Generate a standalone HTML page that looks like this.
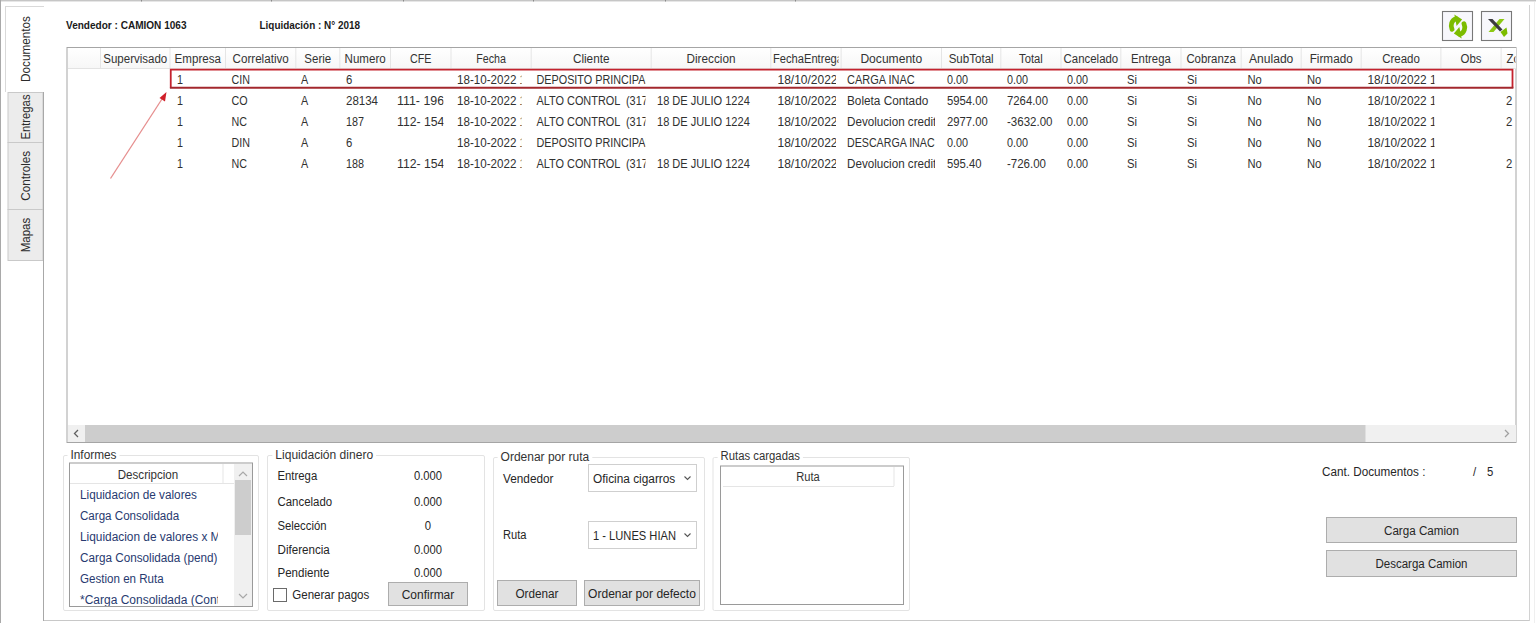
<!DOCTYPE html>
<html><head><meta charset="utf-8"><style>
html,body{margin:0;padding:0;width:1536px;height:623px;overflow:hidden;background:#fff}
svg text{font-family:"Liberation Sans",sans-serif}
</style></head><body>
<svg width="1536" height="623" viewBox="0 0 1536 623" style="display:block">
<rect x="0" y="0" width="1536" height="623" fill="#ffffff"/>
<rect x="0" y="0" width="1536" height="1" fill="#c6c6c6"/>
<rect x="0" y="1" width="1536" height="1" fill="#e6e6e6"/>
<rect x="0" y="0" width="1" height="623" fill="#a9a9a9"/>
<rect x="141" y="0" width="1" height="1.5" fill="#8a8a8a"/>
<rect x="271" y="0" width="1" height="1.5" fill="#8a8a8a"/>
<rect x="403" y="0" width="1" height="1.5" fill="#8a8a8a"/>
<rect x="533" y="0" width="1" height="1.5" fill="#8a8a8a"/>
<rect x="665" y="0" width="1" height="1.5" fill="#8a8a8a"/>
<rect x="795" y="0" width="1" height="1.5" fill="#8a8a8a"/>
<rect x="43" y="6" width="1" height="615" fill="#a8a8a8"/>
<rect x="43" y="620" width="1487" height="1" fill="#c8c8c8"/>
<rect x="1529" y="5" width="1" height="616" fill="#d2d2d2"/>
<rect x="1534" y="2" width="1" height="621" fill="#efefef"/>
<rect x="5" y="6" width="39" height="86" fill="#ffffff"/>
<rect x="5" y="6" width="39" height="1" fill="#d9d9d9"/>
<rect x="5" y="6" width="1" height="86" fill="#d9d9d9"/>
<g transform="translate(29.5 49) rotate(-90)">
<text x="0" y="0" font-size="12" fill="#2b2b2b" text-anchor="middle" textLength="66.0" lengthAdjust="spacingAndGlyphs">Documentos</text>
</g>
<rect x="8" y="92.5" width="35" height="50.0" fill="#ececec"/>
<rect x="8" y="92.5" width="35" height="50.0" fill="none" stroke="#c9c9c9" stroke-width="1"/>
<g transform="translate(29.5 117) rotate(-90)">
<text x="0" y="0" font-size="12" fill="#2b2b2b" text-anchor="middle" textLength="45.0" lengthAdjust="spacingAndGlyphs">Entregas</text>
</g>
<rect x="8" y="142.5" width="35" height="67.0" fill="#ececec"/>
<rect x="8" y="142.5" width="35" height="67.0" fill="none" stroke="#c9c9c9" stroke-width="1"/>
<g transform="translate(29.5 175.8) rotate(-90)">
<text x="0" y="0" font-size="12" fill="#2b2b2b" text-anchor="middle" textLength="49.7" lengthAdjust="spacingAndGlyphs">Controles</text>
</g>
<rect x="8" y="209.5" width="35" height="51.0" fill="#ececec"/>
<rect x="8" y="209.5" width="35" height="51.0" fill="none" stroke="#c9c9c9" stroke-width="1"/>
<g transform="translate(29.5 235) rotate(-90)">
<text x="0" y="0" font-size="12" fill="#2b2b2b" text-anchor="middle" textLength="34.5" lengthAdjust="spacingAndGlyphs">Mapas</text>
</g>
<rect x="43" y="92" width="1" height="529" fill="#a8a8a8"/>
<text x="66" y="29" font-size="11.5" font-weight="bold" fill="#1a1a1a" text-anchor="start" textLength="120.5" lengthAdjust="spacingAndGlyphs">Vendedor : CAMION 1063</text>
<text x="259.5" y="29" font-size="11.5" font-weight="bold" fill="#1a1a1a" text-anchor="start" textLength="100.5" lengthAdjust="spacingAndGlyphs">Liquidación : N° 2018</text>
<rect x="1442.5" y="11.5" width="30" height="29" fill="#f7f7fc" stroke="#787878" stroke-width="1.1"/>
<rect x="1481.5" y="11.5" width="30" height="29" fill="#f7f7fc" stroke="#787878" stroke-width="1.1"/>
<g transform="translate(1458 26.5) scale(0.92) translate(-1458 -26.5)"><g fill="none" stroke="#7cbc00" stroke-width="5.2" stroke-linecap="round"><path d="M1451.5 29.5 C1449.5 25 1451 19.5 1456 18"/><path d="M1464.5 23.5 C1466.5 28 1465 33.5 1460 35"/></g><g fill="#7cbc00"><path d="M1454 13.5 L1462.5 19 L1456.5 26 Z"/><path d="M1462 39.5 L1453.5 34 L1459.5 27 Z"/></g></g>
<path d="M1488.5 32 L1499.5 19 L1504.5 19 L1493.5 32 Z" fill="#8cc814"/>
<path d="M1488 19 L1492.5 19 L1502.5 29.5 L1500 31.5 Z" fill="#3c3c40"/>
<path d="M1500.5 32 L1506.5 27.5 L1507.5 33.5 L1504 37 Z" fill="#7cbc00"/>
<rect x="67" y="47.5" width="1449.0" height="395.0" fill="#ffffff" stroke="#a5a5a5" stroke-width="1"/>
<defs><linearGradient id="hg" x1="0" y1="0" x2="0" y2="1"><stop offset="0" stop-color="#ffffff"/><stop offset="1" stop-color="#f7f7f7"/></linearGradient></defs>
<rect x="68" y="48" width="1448" height="20" fill="url(#hg)"/>
<rect x="68" y="68" width="1448" height="1" fill="#e3e3e3"/>
<rect x="100" y="48" width="1" height="20" fill="#e5e5e5"/>
<rect x="169.5" y="48" width="1" height="20" fill="#e5e5e5"/>
<rect x="225" y="48" width="1" height="20" fill="#e5e5e5"/>
<rect x="295.3" y="48" width="1" height="20" fill="#e5e5e5"/>
<rect x="339.3" y="48" width="1" height="20" fill="#e5e5e5"/>
<rect x="390" y="48" width="1" height="20" fill="#e5e5e5"/>
<rect x="450.5" y="48" width="1" height="20" fill="#e5e5e5"/>
<rect x="530.7" y="48" width="1" height="20" fill="#e5e5e5"/>
<rect x="650.7" y="48" width="1" height="20" fill="#e5e5e5"/>
<rect x="770.3" y="48" width="1" height="20" fill="#e5e5e5"/>
<rect x="840.6" y="48" width="1" height="20" fill="#e5e5e5"/>
<rect x="941" y="48" width="1" height="20" fill="#e5e5e5"/>
<rect x="1000.3" y="48" width="1" height="20" fill="#e5e5e5"/>
<rect x="1060.5" y="48" width="1" height="20" fill="#e5e5e5"/>
<rect x="1120.3" y="48" width="1" height="20" fill="#e5e5e5"/>
<rect x="1180.5" y="48" width="1" height="20" fill="#e5e5e5"/>
<rect x="1240.7" y="48" width="1" height="20" fill="#e5e5e5"/>
<rect x="1300.7" y="48" width="1" height="20" fill="#e5e5e5"/>
<rect x="1360.7" y="48" width="1" height="20" fill="#e5e5e5"/>
<rect x="1440.4" y="48" width="1" height="20" fill="#e5e5e5"/>
<rect x="1500.6" y="48" width="1" height="20" fill="#e5e5e5"/>
<svg x="101" y="48" width="68.5" height="20" overflow="hidden">
<text x="34.25" y="14.899999999999999" font-size="12" fill="#333333" text-anchor="middle" textLength="64.0" lengthAdjust="spacingAndGlyphs">Supervisado</text>
</svg>
<svg x="170.5" y="48" width="54.5" height="20" overflow="hidden">
<text x="27.25" y="14.899999999999999" font-size="12" fill="#333333" text-anchor="middle" textLength="46.3" lengthAdjust="spacingAndGlyphs">Empresa</text>
</svg>
<svg x="226" y="48" width="69.30000000000001" height="20" overflow="hidden">
<text x="34.650000000000006" y="14.899999999999999" font-size="12" fill="#333333" text-anchor="middle" textLength="56.2" lengthAdjust="spacingAndGlyphs">Correlativo</text>
</svg>
<svg x="296.3" y="48" width="43.0" height="20" overflow="hidden">
<text x="21.5" y="14.899999999999999" font-size="12" fill="#333333" text-anchor="middle" textLength="26.9" lengthAdjust="spacingAndGlyphs">Serie</text>
</svg>
<svg x="340.3" y="48" width="49.69999999999999" height="20" overflow="hidden">
<text x="24.849999999999994" y="14.899999999999999" font-size="12" fill="#333333" text-anchor="middle" textLength="41.1" lengthAdjust="spacingAndGlyphs">Numero</text>
</svg>
<svg x="391" y="48" width="59.5" height="20" overflow="hidden">
<text x="29.75" y="14.899999999999999" font-size="12" fill="#333333" text-anchor="middle" textLength="21.5" lengthAdjust="spacingAndGlyphs">CFE</text>
</svg>
<svg x="451.5" y="48" width="79.20000000000005" height="20" overflow="hidden">
<text x="39.60000000000002" y="14.899999999999999" font-size="12" fill="#333333" text-anchor="middle" textLength="29.7" lengthAdjust="spacingAndGlyphs">Fecha</text>
</svg>
<svg x="531.7" y="48" width="119.0" height="20" overflow="hidden">
<text x="59.5" y="14.899999999999999" font-size="12" fill="#333333" text-anchor="middle" textLength="36.6" lengthAdjust="spacingAndGlyphs">Cliente</text>
</svg>
<svg x="651.7" y="48" width="118.59999999999991" height="20" overflow="hidden">
<text x="59.299999999999955" y="14.899999999999999" font-size="12" fill="#333333" text-anchor="middle" textLength="48.9" lengthAdjust="spacingAndGlyphs">Direccion</text>
</svg>
<svg x="771.3" y="48" width="67.20000000000005" height="20" overflow="hidden">
<text x="1.7000000000000455" y="14.899999999999999" font-size="12" fill="#333333" text-anchor="start" textLength="70.0" lengthAdjust="spacingAndGlyphs">FechaEntrega</text>
</svg>
<svg x="841.6" y="48" width="99.39999999999998" height="20" overflow="hidden">
<text x="49.69999999999999" y="14.899999999999999" font-size="12" fill="#333333" text-anchor="middle" textLength="61.8" lengthAdjust="spacingAndGlyphs">Documento</text>
</svg>
<svg x="942" y="48" width="58.299999999999955" height="20" overflow="hidden">
<text x="29.149999999999977" y="14.899999999999999" font-size="12" fill="#333333" text-anchor="middle" textLength="45.0" lengthAdjust="spacingAndGlyphs">SubTotal</text>
</svg>
<svg x="1001.3" y="48" width="59.200000000000045" height="20" overflow="hidden">
<text x="29.600000000000023" y="14.899999999999999" font-size="12" fill="#333333" text-anchor="middle" textLength="23.7" lengthAdjust="spacingAndGlyphs">Total</text>
</svg>
<svg x="1061.5" y="48" width="58.799999999999955" height="20" overflow="hidden">
<text x="29.399999999999977" y="14.899999999999999" font-size="12" fill="#333333" text-anchor="middle" textLength="54.6" lengthAdjust="spacingAndGlyphs">Cancelado</text>
</svg>
<svg x="1121.3" y="48" width="59.200000000000045" height="20" overflow="hidden">
<text x="29.600000000000023" y="14.899999999999999" font-size="12" fill="#333333" text-anchor="middle" textLength="39.7" lengthAdjust="spacingAndGlyphs">Entrega</text>
</svg>
<svg x="1181.5" y="48" width="59.200000000000045" height="20" overflow="hidden">
<text x="29.600000000000023" y="14.899999999999999" font-size="12" fill="#333333" text-anchor="middle" textLength="49.4" lengthAdjust="spacingAndGlyphs">Cobranza</text>
</svg>
<svg x="1241.7" y="48" width="59.0" height="20" overflow="hidden">
<text x="29.5" y="14.899999999999999" font-size="12" fill="#333333" text-anchor="middle" textLength="44.3" lengthAdjust="spacingAndGlyphs">Anulado</text>
</svg>
<svg x="1301.7" y="48" width="59.0" height="20" overflow="hidden">
<text x="29.5" y="14.899999999999999" font-size="12" fill="#333333" text-anchor="middle" textLength="43.0" lengthAdjust="spacingAndGlyphs">Firmado</text>
</svg>
<svg x="1361.7" y="48" width="78.70000000000005" height="20" overflow="hidden">
<text x="39.35000000000002" y="14.899999999999999" font-size="12" fill="#333333" text-anchor="middle" textLength="37.7" lengthAdjust="spacingAndGlyphs">Creado</text>
</svg>
<svg x="1441.4" y="48" width="59.19999999999982" height="20" overflow="hidden">
<text x="29.59999999999991" y="14.899999999999999" font-size="12" fill="#333333" text-anchor="middle" textLength="21.0" lengthAdjust="spacingAndGlyphs">Obs</text>
</svg>
<svg x="1501.6" y="48" width="13.900000000000091" height="20" overflow="hidden">
<text x="4.900000000000091" y="14.899999999999999" font-size="12" fill="#333333" text-anchor="start" textLength="26.1" lengthAdjust="spacingAndGlyphs">Zona</text>
</svg>
<svg x="169.5" y="68" width="49.5" height="21" overflow="hidden">
<text x="7.5" y="16" font-size="12" fill="#303030" text-anchor="start" textLength="6.0" lengthAdjust="spacingAndGlyphs">1</text>
</svg>
<svg x="225" y="68" width="64.30000000000001" height="21" overflow="hidden">
<text x="6.5" y="16" font-size="12" fill="#303030" text-anchor="start" textLength="18.5" lengthAdjust="spacingAndGlyphs">CIN</text>
</svg>
<svg x="295.3" y="68" width="38.0" height="21" overflow="hidden">
<text x="5.699999999999989" y="16" font-size="12" fill="#303030" text-anchor="start" textLength="7.2" lengthAdjust="spacingAndGlyphs">A</text>
</svg>
<svg x="339.3" y="68" width="44.69999999999999" height="21" overflow="hidden">
<text x="6.699999999999989" y="16" font-size="12" fill="#303030" text-anchor="start" textLength="6.3" lengthAdjust="spacingAndGlyphs">6</text>
</svg>
<svg x="450.5" y="68" width="71.0" height="21" overflow="hidden">
<text x="6.5" y="16" font-size="12" fill="#303030" text-anchor="start" textLength="69.0" lengthAdjust="spacingAndGlyphs">18-10-2022 1</text>
</svg>
<svg x="530.7" y="68" width="114.79999999999995" height="21" overflow="hidden">
<text x="5.7999999999999545" y="16" font-size="12" fill="#303030" text-anchor="start" textLength="115.0" lengthAdjust="spacingAndGlyphs">DEPOSITO PRINCIPAL</text>
</svg>
<svg x="770.3" y="68" width="65.70000000000005" height="21" overflow="hidden">
<text x="7.2000000000000455" y="16" font-size="12" fill="#303030" text-anchor="start" textLength="60.0" lengthAdjust="spacingAndGlyphs">18/10/2022</text>
</svg>
<svg x="840.6" y="68" width="94.39999999999998" height="21" overflow="hidden">
<text x="6.399999999999977" y="16" font-size="12" fill="#303030" text-anchor="start" textLength="67.7" lengthAdjust="spacingAndGlyphs">CARGA INAC</text>
</svg>
<svg x="941" y="68" width="53.299999999999955" height="21" overflow="hidden">
<text x="6" y="16" font-size="12" fill="#303030" text-anchor="start" textLength="21.0" lengthAdjust="spacingAndGlyphs">0.00</text>
</svg>
<svg x="1000.3" y="68" width="54.200000000000045" height="21" overflow="hidden">
<text x="6.7000000000000455" y="16" font-size="12" fill="#303030" text-anchor="start" textLength="21.0" lengthAdjust="spacingAndGlyphs">0.00</text>
</svg>
<svg x="1060.5" y="68" width="53.799999999999955" height="21" overflow="hidden">
<text x="6.5" y="16" font-size="12" fill="#303030" text-anchor="start" textLength="21.0" lengthAdjust="spacingAndGlyphs">0.00</text>
</svg>
<svg x="1120.3" y="68" width="54.200000000000045" height="21" overflow="hidden">
<text x="6.7000000000000455" y="16" font-size="12" fill="#303030" text-anchor="start" textLength="10.0" lengthAdjust="spacingAndGlyphs">Si</text>
</svg>
<svg x="1180.5" y="68" width="54.200000000000045" height="21" overflow="hidden">
<text x="6.5" y="16" font-size="12" fill="#303030" text-anchor="start" textLength="10.0" lengthAdjust="spacingAndGlyphs">Si</text>
</svg>
<svg x="1240.7" y="68" width="54.0" height="21" overflow="hidden">
<text x="6.7999999999999545" y="16" font-size="12" fill="#303030" text-anchor="start" textLength="14.3" lengthAdjust="spacingAndGlyphs">No</text>
</svg>
<svg x="1300.7" y="68" width="54.0" height="21" overflow="hidden">
<text x="6.2999999999999545" y="16" font-size="12" fill="#303030" text-anchor="start" textLength="14.3" lengthAdjust="spacingAndGlyphs">No</text>
</svg>
<svg x="1360.7" y="68" width="73.79999999999995" height="21" overflow="hidden">
<text x="6.7999999999999545" y="16" font-size="12" fill="#303030" text-anchor="start" textLength="69.0" lengthAdjust="spacingAndGlyphs">18/10/2022 1</text>
</svg>
<svg x="169.5" y="89" width="49.5" height="21" overflow="hidden">
<text x="7.5" y="16" font-size="12" fill="#303030" text-anchor="start" textLength="6.0" lengthAdjust="spacingAndGlyphs">1</text>
</svg>
<svg x="225" y="89" width="64.30000000000001" height="21" overflow="hidden">
<text x="6.5" y="16" font-size="12" fill="#303030" text-anchor="start" textLength="16.1" lengthAdjust="spacingAndGlyphs">CO</text>
</svg>
<svg x="295.3" y="89" width="38.0" height="21" overflow="hidden">
<text x="5.699999999999989" y="16" font-size="12" fill="#303030" text-anchor="start" textLength="7.2" lengthAdjust="spacingAndGlyphs">A</text>
</svg>
<svg x="339.3" y="89" width="44.69999999999999" height="21" overflow="hidden">
<text x="6.699999999999989" y="16" font-size="12" fill="#303030" text-anchor="start" textLength="32.0" lengthAdjust="spacingAndGlyphs">28134</text>
</svg>
<svg x="390" y="89" width="53.5" height="21" overflow="hidden">
<text x="7" y="16" font-size="12" fill="#303030" text-anchor="start" textLength="61.0" lengthAdjust="spacingAndGlyphs">111- 19637</text>
</svg>
<svg x="450.5" y="89" width="71.0" height="21" overflow="hidden">
<text x="6.5" y="16" font-size="12" fill="#303030" text-anchor="start" textLength="69.0" lengthAdjust="spacingAndGlyphs">18-10-2022 1</text>
</svg>
<svg x="530.7" y="89" width="114.79999999999995" height="21" overflow="hidden">
<text x="5.7999999999999545" y="16" font-size="12" fill="#303030" text-anchor="start" textLength="121.0" lengthAdjust="spacingAndGlyphs">ALTO CONTROL  (3171)</text>
</svg>
<svg x="650.7" y="89" width="113.59999999999991" height="21" overflow="hidden">
<text x="6.2999999999999545" y="16" font-size="12" fill="#303030" text-anchor="start" textLength="92.8" lengthAdjust="spacingAndGlyphs">18 DE JULIO 1224</text>
</svg>
<svg x="770.3" y="89" width="65.70000000000005" height="21" overflow="hidden">
<text x="7.2000000000000455" y="16" font-size="12" fill="#303030" text-anchor="start" textLength="60.0" lengthAdjust="spacingAndGlyphs">18/10/2022</text>
</svg>
<svg x="840.6" y="89" width="94.39999999999998" height="21" overflow="hidden">
<text x="6.399999999999977" y="16" font-size="12" fill="#303030" text-anchor="start" textLength="81.3" lengthAdjust="spacingAndGlyphs">Boleta Contado</text>
</svg>
<svg x="941" y="89" width="53.299999999999955" height="21" overflow="hidden">
<text x="6" y="16" font-size="12" fill="#303030" text-anchor="start" textLength="40.7" lengthAdjust="spacingAndGlyphs">5954.00</text>
</svg>
<svg x="1000.3" y="89" width="54.200000000000045" height="21" overflow="hidden">
<text x="6.7000000000000455" y="16" font-size="12" fill="#303030" text-anchor="start" textLength="41.0" lengthAdjust="spacingAndGlyphs">7264.00</text>
</svg>
<svg x="1060.5" y="89" width="53.799999999999955" height="21" overflow="hidden">
<text x="6.5" y="16" font-size="12" fill="#303030" text-anchor="start" textLength="21.0" lengthAdjust="spacingAndGlyphs">0.00</text>
</svg>
<svg x="1120.3" y="89" width="54.200000000000045" height="21" overflow="hidden">
<text x="6.7000000000000455" y="16" font-size="12" fill="#303030" text-anchor="start" textLength="10.0" lengthAdjust="spacingAndGlyphs">Si</text>
</svg>
<svg x="1180.5" y="89" width="54.200000000000045" height="21" overflow="hidden">
<text x="6.5" y="16" font-size="12" fill="#303030" text-anchor="start" textLength="10.0" lengthAdjust="spacingAndGlyphs">Si</text>
</svg>
<svg x="1240.7" y="89" width="54.0" height="21" overflow="hidden">
<text x="6.7999999999999545" y="16" font-size="12" fill="#303030" text-anchor="start" textLength="14.3" lengthAdjust="spacingAndGlyphs">No</text>
</svg>
<svg x="1300.7" y="89" width="54.0" height="21" overflow="hidden">
<text x="6.2999999999999545" y="16" font-size="12" fill="#303030" text-anchor="start" textLength="14.3" lengthAdjust="spacingAndGlyphs">No</text>
</svg>
<svg x="1360.7" y="89" width="73.79999999999995" height="21" overflow="hidden">
<text x="6.7999999999999545" y="16" font-size="12" fill="#303030" text-anchor="start" textLength="69.0" lengthAdjust="spacingAndGlyphs">18/10/2022 1</text>
</svg>
<svg x="1500.6" y="89" width="14.900000000000091" height="21" overflow="hidden">
<text x="5.400000000000091" y="16" font-size="12" fill="#303030" text-anchor="start" textLength="6.3" lengthAdjust="spacingAndGlyphs">2</text>
</svg>
<svg x="169.5" y="110" width="49.5" height="21" overflow="hidden">
<text x="7.5" y="16" font-size="12" fill="#303030" text-anchor="start" textLength="6.0" lengthAdjust="spacingAndGlyphs">1</text>
</svg>
<svg x="225" y="110" width="64.30000000000001" height="21" overflow="hidden">
<text x="6.5" y="16" font-size="12" fill="#303030" text-anchor="start" textLength="15.5" lengthAdjust="spacingAndGlyphs">NC</text>
</svg>
<svg x="295.3" y="110" width="38.0" height="21" overflow="hidden">
<text x="5.699999999999989" y="16" font-size="12" fill="#303030" text-anchor="start" textLength="7.2" lengthAdjust="spacingAndGlyphs">A</text>
</svg>
<svg x="339.3" y="110" width="44.69999999999999" height="21" overflow="hidden">
<text x="6.699999999999989" y="16" font-size="12" fill="#303030" text-anchor="start" textLength="18.0" lengthAdjust="spacingAndGlyphs">187</text>
</svg>
<svg x="390" y="110" width="53.5" height="21" overflow="hidden">
<text x="7" y="16" font-size="12" fill="#303030" text-anchor="start" textLength="61.0" lengthAdjust="spacingAndGlyphs">112- 15432</text>
</svg>
<svg x="450.5" y="110" width="71.0" height="21" overflow="hidden">
<text x="6.5" y="16" font-size="12" fill="#303030" text-anchor="start" textLength="69.0" lengthAdjust="spacingAndGlyphs">18-10-2022 1</text>
</svg>
<svg x="530.7" y="110" width="114.79999999999995" height="21" overflow="hidden">
<text x="5.7999999999999545" y="16" font-size="12" fill="#303030" text-anchor="start" textLength="121.0" lengthAdjust="spacingAndGlyphs">ALTO CONTROL  (3171)</text>
</svg>
<svg x="650.7" y="110" width="113.59999999999991" height="21" overflow="hidden">
<text x="6.2999999999999545" y="16" font-size="12" fill="#303030" text-anchor="start" textLength="92.8" lengthAdjust="spacingAndGlyphs">18 DE JULIO 1224</text>
</svg>
<svg x="770.3" y="110" width="65.70000000000005" height="21" overflow="hidden">
<text x="7.2000000000000455" y="16" font-size="12" fill="#303030" text-anchor="start" textLength="60.0" lengthAdjust="spacingAndGlyphs">18/10/2022</text>
</svg>
<svg x="840.6" y="110" width="94.39999999999998" height="21" overflow="hidden">
<text x="6.399999999999977" y="16" font-size="12" fill="#303030" text-anchor="start" textLength="95.8" lengthAdjust="spacingAndGlyphs">Devolucion credito</text>
</svg>
<svg x="941" y="110" width="53.299999999999955" height="21" overflow="hidden">
<text x="6" y="16" font-size="12" fill="#303030" text-anchor="start" textLength="40.7" lengthAdjust="spacingAndGlyphs">2977.00</text>
</svg>
<svg x="1000.3" y="110" width="54.200000000000045" height="21" overflow="hidden">
<text x="6.7000000000000455" y="16" font-size="12" fill="#303030" text-anchor="start" textLength="45.5" lengthAdjust="spacingAndGlyphs">-3632.00</text>
</svg>
<svg x="1060.5" y="110" width="53.799999999999955" height="21" overflow="hidden">
<text x="6.5" y="16" font-size="12" fill="#303030" text-anchor="start" textLength="21.0" lengthAdjust="spacingAndGlyphs">0.00</text>
</svg>
<svg x="1120.3" y="110" width="54.200000000000045" height="21" overflow="hidden">
<text x="6.7000000000000455" y="16" font-size="12" fill="#303030" text-anchor="start" textLength="10.0" lengthAdjust="spacingAndGlyphs">Si</text>
</svg>
<svg x="1180.5" y="110" width="54.200000000000045" height="21" overflow="hidden">
<text x="6.5" y="16" font-size="12" fill="#303030" text-anchor="start" textLength="10.0" lengthAdjust="spacingAndGlyphs">Si</text>
</svg>
<svg x="1240.7" y="110" width="54.0" height="21" overflow="hidden">
<text x="6.7999999999999545" y="16" font-size="12" fill="#303030" text-anchor="start" textLength="14.3" lengthAdjust="spacingAndGlyphs">No</text>
</svg>
<svg x="1300.7" y="110" width="54.0" height="21" overflow="hidden">
<text x="6.2999999999999545" y="16" font-size="12" fill="#303030" text-anchor="start" textLength="14.3" lengthAdjust="spacingAndGlyphs">No</text>
</svg>
<svg x="1360.7" y="110" width="73.79999999999995" height="21" overflow="hidden">
<text x="6.7999999999999545" y="16" font-size="12" fill="#303030" text-anchor="start" textLength="69.0" lengthAdjust="spacingAndGlyphs">18/10/2022 1</text>
</svg>
<svg x="1500.6" y="110" width="14.900000000000091" height="21" overflow="hidden">
<text x="5.400000000000091" y="16" font-size="12" fill="#303030" text-anchor="start" textLength="6.3" lengthAdjust="spacingAndGlyphs">2</text>
</svg>
<svg x="169.5" y="131" width="49.5" height="21" overflow="hidden">
<text x="7.5" y="16" font-size="12" fill="#303030" text-anchor="start" textLength="6.0" lengthAdjust="spacingAndGlyphs">1</text>
</svg>
<svg x="225" y="131" width="64.30000000000001" height="21" overflow="hidden">
<text x="6.5" y="16" font-size="12" fill="#303030" text-anchor="start" textLength="18.5" lengthAdjust="spacingAndGlyphs">DIN</text>
</svg>
<svg x="295.3" y="131" width="38.0" height="21" overflow="hidden">
<text x="5.699999999999989" y="16" font-size="12" fill="#303030" text-anchor="start" textLength="7.2" lengthAdjust="spacingAndGlyphs">A</text>
</svg>
<svg x="339.3" y="131" width="44.69999999999999" height="21" overflow="hidden">
<text x="6.699999999999989" y="16" font-size="12" fill="#303030" text-anchor="start" textLength="6.3" lengthAdjust="spacingAndGlyphs">6</text>
</svg>
<svg x="450.5" y="131" width="71.0" height="21" overflow="hidden">
<text x="6.5" y="16" font-size="12" fill="#303030" text-anchor="start" textLength="69.0" lengthAdjust="spacingAndGlyphs">18-10-2022 1</text>
</svg>
<svg x="530.7" y="131" width="114.79999999999995" height="21" overflow="hidden">
<text x="5.7999999999999545" y="16" font-size="12" fill="#303030" text-anchor="start" textLength="115.0" lengthAdjust="spacingAndGlyphs">DEPOSITO PRINCIPAL</text>
</svg>
<svg x="770.3" y="131" width="65.70000000000005" height="21" overflow="hidden">
<text x="7.2000000000000455" y="16" font-size="12" fill="#303030" text-anchor="start" textLength="60.0" lengthAdjust="spacingAndGlyphs">18/10/2022</text>
</svg>
<svg x="840.6" y="131" width="94.39999999999998" height="21" overflow="hidden">
<text x="6.399999999999977" y="16" font-size="12" fill="#303030" text-anchor="start" textLength="87.6" lengthAdjust="spacingAndGlyphs">DESCARGA INAC</text>
</svg>
<svg x="941" y="131" width="53.299999999999955" height="21" overflow="hidden">
<text x="6" y="16" font-size="12" fill="#303030" text-anchor="start" textLength="21.0" lengthAdjust="spacingAndGlyphs">0.00</text>
</svg>
<svg x="1000.3" y="131" width="54.200000000000045" height="21" overflow="hidden">
<text x="6.7000000000000455" y="16" font-size="12" fill="#303030" text-anchor="start" textLength="21.0" lengthAdjust="spacingAndGlyphs">0.00</text>
</svg>
<svg x="1060.5" y="131" width="53.799999999999955" height="21" overflow="hidden">
<text x="6.5" y="16" font-size="12" fill="#303030" text-anchor="start" textLength="21.0" lengthAdjust="spacingAndGlyphs">0.00</text>
</svg>
<svg x="1120.3" y="131" width="54.200000000000045" height="21" overflow="hidden">
<text x="6.7000000000000455" y="16" font-size="12" fill="#303030" text-anchor="start" textLength="10.0" lengthAdjust="spacingAndGlyphs">Si</text>
</svg>
<svg x="1180.5" y="131" width="54.200000000000045" height="21" overflow="hidden">
<text x="6.5" y="16" font-size="12" fill="#303030" text-anchor="start" textLength="10.0" lengthAdjust="spacingAndGlyphs">Si</text>
</svg>
<svg x="1240.7" y="131" width="54.0" height="21" overflow="hidden">
<text x="6.7999999999999545" y="16" font-size="12" fill="#303030" text-anchor="start" textLength="14.3" lengthAdjust="spacingAndGlyphs">No</text>
</svg>
<svg x="1300.7" y="131" width="54.0" height="21" overflow="hidden">
<text x="6.2999999999999545" y="16" font-size="12" fill="#303030" text-anchor="start" textLength="14.3" lengthAdjust="spacingAndGlyphs">No</text>
</svg>
<svg x="1360.7" y="131" width="73.79999999999995" height="21" overflow="hidden">
<text x="6.7999999999999545" y="16" font-size="12" fill="#303030" text-anchor="start" textLength="69.0" lengthAdjust="spacingAndGlyphs">18/10/2022 1</text>
</svg>
<svg x="169.5" y="152" width="49.5" height="21" overflow="hidden">
<text x="7.5" y="16" font-size="12" fill="#303030" text-anchor="start" textLength="6.0" lengthAdjust="spacingAndGlyphs">1</text>
</svg>
<svg x="225" y="152" width="64.30000000000001" height="21" overflow="hidden">
<text x="6.5" y="16" font-size="12" fill="#303030" text-anchor="start" textLength="15.5" lengthAdjust="spacingAndGlyphs">NC</text>
</svg>
<svg x="295.3" y="152" width="38.0" height="21" overflow="hidden">
<text x="5.699999999999989" y="16" font-size="12" fill="#303030" text-anchor="start" textLength="7.2" lengthAdjust="spacingAndGlyphs">A</text>
</svg>
<svg x="339.3" y="152" width="44.69999999999999" height="21" overflow="hidden">
<text x="6.699999999999989" y="16" font-size="12" fill="#303030" text-anchor="start" textLength="18.0" lengthAdjust="spacingAndGlyphs">188</text>
</svg>
<svg x="390" y="152" width="53.5" height="21" overflow="hidden">
<text x="7" y="16" font-size="12" fill="#303030" text-anchor="start" textLength="61.0" lengthAdjust="spacingAndGlyphs">112- 15432</text>
</svg>
<svg x="450.5" y="152" width="71.0" height="21" overflow="hidden">
<text x="6.5" y="16" font-size="12" fill="#303030" text-anchor="start" textLength="69.0" lengthAdjust="spacingAndGlyphs">18-10-2022 1</text>
</svg>
<svg x="530.7" y="152" width="114.79999999999995" height="21" overflow="hidden">
<text x="5.7999999999999545" y="16" font-size="12" fill="#303030" text-anchor="start" textLength="121.0" lengthAdjust="spacingAndGlyphs">ALTO CONTROL  (3171)</text>
</svg>
<svg x="650.7" y="152" width="113.59999999999991" height="21" overflow="hidden">
<text x="6.2999999999999545" y="16" font-size="12" fill="#303030" text-anchor="start" textLength="92.8" lengthAdjust="spacingAndGlyphs">18 DE JULIO 1224</text>
</svg>
<svg x="770.3" y="152" width="65.70000000000005" height="21" overflow="hidden">
<text x="7.2000000000000455" y="16" font-size="12" fill="#303030" text-anchor="start" textLength="60.0" lengthAdjust="spacingAndGlyphs">18/10/2022</text>
</svg>
<svg x="840.6" y="152" width="94.39999999999998" height="21" overflow="hidden">
<text x="6.399999999999977" y="16" font-size="12" fill="#303030" text-anchor="start" textLength="95.8" lengthAdjust="spacingAndGlyphs">Devolucion credito</text>
</svg>
<svg x="941" y="152" width="53.299999999999955" height="21" overflow="hidden">
<text x="6" y="16" font-size="12" fill="#303030" text-anchor="start" textLength="34.5" lengthAdjust="spacingAndGlyphs">595.40</text>
</svg>
<svg x="1000.3" y="152" width="54.200000000000045" height="21" overflow="hidden">
<text x="6.7000000000000455" y="16" font-size="12" fill="#303030" text-anchor="start" textLength="39.0" lengthAdjust="spacingAndGlyphs">-726.00</text>
</svg>
<svg x="1060.5" y="152" width="53.799999999999955" height="21" overflow="hidden">
<text x="6.5" y="16" font-size="12" fill="#303030" text-anchor="start" textLength="21.0" lengthAdjust="spacingAndGlyphs">0.00</text>
</svg>
<svg x="1120.3" y="152" width="54.200000000000045" height="21" overflow="hidden">
<text x="6.7000000000000455" y="16" font-size="12" fill="#303030" text-anchor="start" textLength="10.0" lengthAdjust="spacingAndGlyphs">Si</text>
</svg>
<svg x="1180.5" y="152" width="54.200000000000045" height="21" overflow="hidden">
<text x="6.5" y="16" font-size="12" fill="#303030" text-anchor="start" textLength="10.0" lengthAdjust="spacingAndGlyphs">Si</text>
</svg>
<svg x="1240.7" y="152" width="54.0" height="21" overflow="hidden">
<text x="6.7999999999999545" y="16" font-size="12" fill="#303030" text-anchor="start" textLength="14.3" lengthAdjust="spacingAndGlyphs">No</text>
</svg>
<svg x="1300.7" y="152" width="54.0" height="21" overflow="hidden">
<text x="6.2999999999999545" y="16" font-size="12" fill="#303030" text-anchor="start" textLength="14.3" lengthAdjust="spacingAndGlyphs">No</text>
</svg>
<svg x="1360.7" y="152" width="73.79999999999995" height="21" overflow="hidden">
<text x="6.7999999999999545" y="16" font-size="12" fill="#303030" text-anchor="start" textLength="69.0" lengthAdjust="spacingAndGlyphs">18/10/2022 1</text>
</svg>
<svg x="1500.6" y="152" width="14.900000000000091" height="21" overflow="hidden">
<text x="5.400000000000091" y="16" font-size="12" fill="#303030" text-anchor="start" textLength="6.3" lengthAdjust="spacingAndGlyphs">2</text>
</svg>
<rect x="68" y="425" width="1448" height="17" fill="#f0f0f0"/>
<rect x="85" y="425" width="1280.5" height="17" fill="#cdcdcd"/>
<path d="M78 430 L74.5 433.5 L78 437" fill="none" stroke="#606060" stroke-width="1.3"/>
<path d="M1505 430 L1508.5 433.5 L1505 437" fill="none" stroke="#a0a0a0" stroke-width="1.3"/>
<path d="M170.75 87.75 L170.75 69.55 L1512.5 69.55 L1512.5 87.75" fill="none" stroke="#c4222d" stroke-width="1.8"/>
<line x1="169.9" y1="87.75" x2="1513.4" y2="87.75" stroke="#a3282e" stroke-width="1.8"/>
<line x1="110.5" y1="178.5" x2="162" y2="99" stroke="#e68e8e" stroke-width="1.3"/>
<path d="M166.5 92 L159.5 98 L165 101.5 Z" fill="#d0202a"/>
<rect x="63.5" y="455.5" width="195" height="155" rx="1.5" fill="none" stroke="#e3e3e3"/>
<rect x="67.5" y="453" width="52" height="5" fill="#ffffff"/>
<text x="70.5" y="459" font-size="12" fill="#333333" text-anchor="start" textLength="46.0" lengthAdjust="spacingAndGlyphs">Informes</text>
<rect x="69.5" y="463" width="183" height="143.5" fill="#ffffff" stroke="#9a9a9a" stroke-width="1"/>
<rect x="70" y="464" width="164" height="19" fill="#ffffff"/>
<rect x="70" y="483" width="164" height="1" fill="#e5e5e5"/>
<rect x="222.5" y="464" width="1" height="19" fill="#e5e5e5"/>
<text x="148" y="478.5" font-size="12" fill="#333333" text-anchor="middle" textLength="60.5" lengthAdjust="spacingAndGlyphs">Descripcion</text>
<rect x="234" y="464" width="18" height="142" fill="#f0f0f0"/>
<rect x="235" y="480" width="16" height="55" fill="#cdcdcd"/>
<path d="M239 476 L243 472 L247 476" fill="none" stroke="#a8a8a8" stroke-width="1.2"/>
<path d="M239 594 L243 598 L247 594" fill="none" stroke="#a8a8a8" stroke-width="1.2"/>
<svg x="70" y="484" width="148" height="122" overflow="hidden">
<text x="10" y="14.699999999999989" font-size="12" fill="#283a70" text-anchor="start" textLength="117.0" lengthAdjust="spacingAndGlyphs">Liquidacion de valores</text>
<text x="10" y="35.700000000000045" font-size="12" fill="#283a70" text-anchor="start" textLength="99.2" lengthAdjust="spacingAndGlyphs">Carga Consolidada</text>
<text x="10" y="56.700000000000045" font-size="12" fill="#283a70" text-anchor="start" textLength="140.5" lengthAdjust="spacingAndGlyphs">Liquidacion de valores x M</text>
<text x="10" y="77.70000000000005" font-size="12" fill="#283a70" text-anchor="start" textLength="137.5" lengthAdjust="spacingAndGlyphs">Carga Consolidada (pend)</text>
<text x="10" y="98.70000000000005" font-size="12" fill="#283a70" text-anchor="start" textLength="83.7" lengthAdjust="spacingAndGlyphs">Gestion en Ruta</text>
<text x="10" y="119.70000000000005" font-size="12" fill="#283a70" text-anchor="start" textLength="140.0" lengthAdjust="spacingAndGlyphs">*Carga Consolidada (Cont</text>
</svg>
<rect x="267.5" y="455.5" width="217" height="155" rx="1.5" fill="none" stroke="#e3e3e3"/>
<rect x="272.3" y="453" width="103.8" height="5" fill="#ffffff"/>
<text x="275.3" y="459" font-size="12" fill="#333333" text-anchor="start" textLength="97.8" lengthAdjust="spacingAndGlyphs">Liquidación dinero</text>
<text x="277.5" y="480.1" font-size="12" fill="#262626" text-anchor="start" textLength="39.7" lengthAdjust="spacingAndGlyphs">Entrega</text>
<text x="277.5" y="506.0" font-size="12" fill="#262626" text-anchor="start" textLength="54.6" lengthAdjust="spacingAndGlyphs">Cancelado</text>
<text x="277.5" y="529.5" font-size="12" fill="#262626" text-anchor="start" textLength="49.0" lengthAdjust="spacingAndGlyphs">Selección</text>
<text x="277.5" y="553.5999999999999" font-size="12" fill="#262626" text-anchor="start" textLength="52.3" lengthAdjust="spacingAndGlyphs">Diferencia</text>
<text x="277.5" y="576.5" font-size="12" fill="#262626" text-anchor="start" textLength="52.0" lengthAdjust="spacingAndGlyphs">Pendiente</text>
<text x="428" y="480.1" font-size="12" fill="#262626" text-anchor="middle" textLength="28.0" lengthAdjust="spacingAndGlyphs">0.000</text>
<text x="428" y="506.0" font-size="12" fill="#262626" text-anchor="middle" textLength="28.0" lengthAdjust="spacingAndGlyphs">0.000</text>
<text x="428" y="529.5" font-size="12" fill="#262626" text-anchor="middle" textLength="6.3" lengthAdjust="spacingAndGlyphs">0</text>
<text x="428" y="553.5999999999999" font-size="12" fill="#262626" text-anchor="middle" textLength="28.0" lengthAdjust="spacingAndGlyphs">0.000</text>
<text x="428" y="576.5" font-size="12" fill="#262626" text-anchor="middle" textLength="28.0" lengthAdjust="spacingAndGlyphs">0.000</text>
<rect x="273.5" y="588.5" width="13" height="13" fill="#ffffff" stroke="#6a6a6a" stroke-width="1"/>
<text x="292.3" y="599" font-size="12" fill="#262626" text-anchor="start" textLength="77.0" lengthAdjust="spacingAndGlyphs">Generar pagos</text>
<rect x="388.5" y="582.5" width="79" height="23" fill="#e1e1e1" stroke="#adadad" stroke-width="1"/>
<text x="428.0" y="598.5" font-size="12" fill="#262626" text-anchor="middle" textLength="52.6" lengthAdjust="spacingAndGlyphs">Confirmar</text>
<rect x="493.5" y="457.5" width="211" height="153" rx="1.5" fill="none" stroke="#e3e3e3"/>
<rect x="497.6" y="455" width="94.7" height="5" fill="#ffffff"/>
<text x="500.6" y="461" font-size="12" fill="#333333" text-anchor="start" textLength="88.7" lengthAdjust="spacingAndGlyphs">Ordenar por ruta</text>
<text x="503" y="482.5" font-size="12" fill="#262626" text-anchor="start" textLength="50.5" lengthAdjust="spacingAndGlyphs">Vendedor</text>
<text x="503" y="539" font-size="12" fill="#262626" text-anchor="start" textLength="23.5" lengthAdjust="spacingAndGlyphs">Ruta</text>
<rect x="588.5" y="464.5" width="108" height="27" fill="#ffffff" stroke="#cfcfcf" stroke-width="1"/>
<svg x="589" y="465" width="88" height="26" overflow="hidden">
<text x="4" y="17.5" font-size="12" fill="#262626" text-anchor="start" textLength="82.3" lengthAdjust="spacingAndGlyphs">Oficina cigarros</text>
</svg>
<path d="M684.5 476.5 L687.5 479.5 L690.5 476.5" fill="none" stroke="#555" stroke-width="1.1"/>
<rect x="588.5" y="521.5" width="108" height="27" fill="#ffffff" stroke="#cfcfcf" stroke-width="1"/>
<svg x="589" y="522" width="88" height="26" overflow="hidden">
<text x="4" y="17.5" font-size="12" fill="#262626" text-anchor="start" textLength="83.0" lengthAdjust="spacingAndGlyphs">1 - LUNES HIAN</text>
</svg>
<path d="M684.5 533.5 L687.5 536.5 L690.5 533.5" fill="none" stroke="#555" stroke-width="1.1"/>
<rect x="497.5" y="580.5" width="79" height="25" fill="#e1e1e1" stroke="#adadad" stroke-width="1"/>
<text x="537.0" y="597.5" font-size="12" fill="#262626" text-anchor="middle" textLength="43.0" lengthAdjust="spacingAndGlyphs">Ordenar</text>
<rect x="584.5" y="580.5" width="115" height="25" fill="#e1e1e1" stroke="#adadad" stroke-width="1"/>
<text x="642.0" y="597.5" font-size="12" fill="#262626" text-anchor="middle" textLength="107.8" lengthAdjust="spacingAndGlyphs">Ordenar por defecto</text>
<rect x="713.0" y="457.5" width="196.5" height="153" rx="1.5" fill="none" stroke="#e3e3e3"/>
<rect x="717.6" y="455" width="85.3" height="5" fill="#ffffff"/>
<text x="720.6" y="460" font-size="12" fill="#333333" text-anchor="start" textLength="79.3" lengthAdjust="spacingAndGlyphs">Rutas cargadas</text>
<rect x="720.5" y="466" width="183" height="138.5" fill="#ffffff" stroke="#9a9a9a" stroke-width="1"/>
<rect x="721" y="467" width="182" height="19" fill="#ffffff"/>
<rect x="723" y="486" width="171" height="1" fill="#e5e5e5"/>
<rect x="893.5" y="467" width="1" height="19" fill="#e5e5e5"/>
<text x="808" y="481" font-size="12" fill="#333333" text-anchor="middle" textLength="23.5" lengthAdjust="spacingAndGlyphs">Ruta</text>
<text x="1322" y="475.5" font-size="12" fill="#262626" text-anchor="start" textLength="103.4" lengthAdjust="spacingAndGlyphs">Cant. Documentos :</text>
<text x="1473" y="475.5" font-size="12" fill="#262626" text-anchor="start" textLength="3.2" lengthAdjust="spacingAndGlyphs">/</text>
<text x="1487" y="475.5" font-size="12" fill="#262626" text-anchor="start" textLength="6.3" lengthAdjust="spacingAndGlyphs">5</text>
<rect x="1326.5" y="517.5" width="190" height="25" fill="#e1e1e1" stroke="#adadad" stroke-width="1"/>
<text x="1421.5" y="534.5" font-size="12" fill="#262626" text-anchor="middle" textLength="75.0" lengthAdjust="spacingAndGlyphs">Carga Camion</text>
<rect x="1326.5" y="550.5" width="190" height="26" fill="#e1e1e1" stroke="#adadad" stroke-width="1"/>
<text x="1421.5" y="568.0" font-size="12" fill="#262626" text-anchor="middle" textLength="92.0" lengthAdjust="spacingAndGlyphs">Descarga Camion</text>
</svg>
</body></html>
